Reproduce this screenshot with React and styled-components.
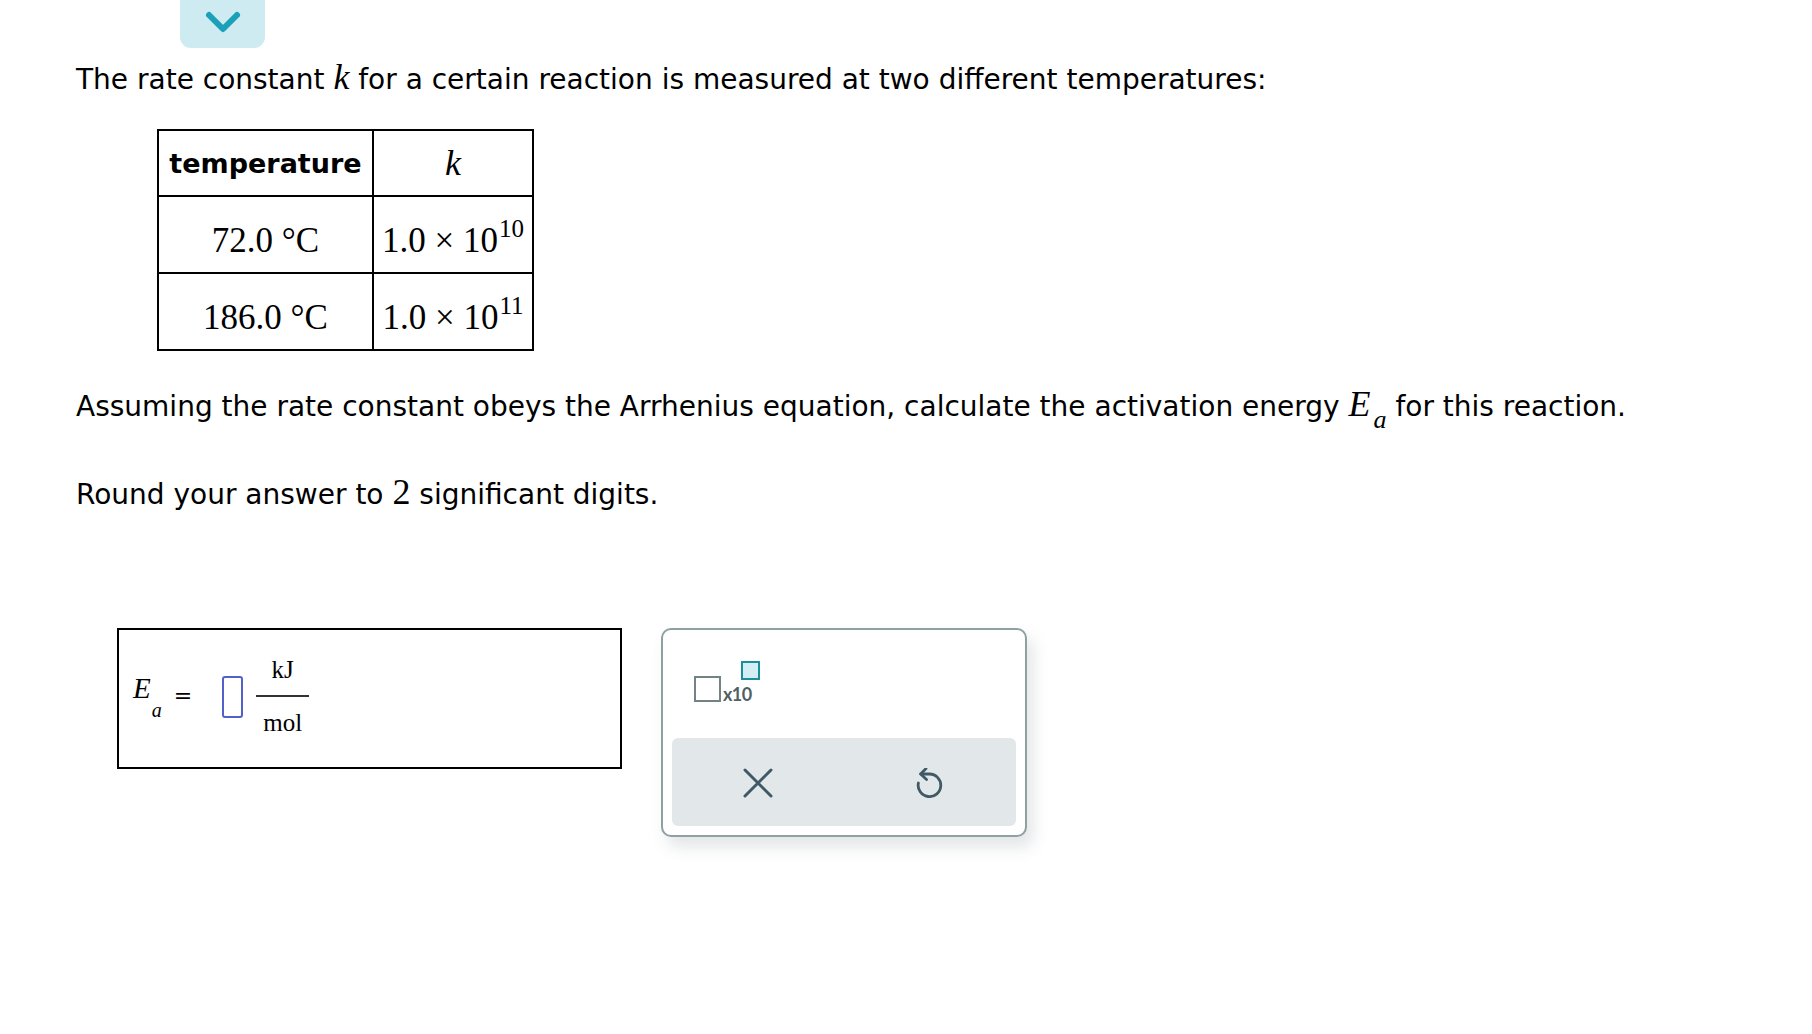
import styled, { createGlobalStyle } from "styled-components";

const GlobalStyle = createGlobalStyle`
  body {
    margin: 0;
    background: #ffffff;
    color: #000000;
    font-family: "DejaVu Sans", Verdana, sans-serif;
  }
`;

const Page = styled.div`
  width: 1812px;
  height: 1034px;
  box-sizing: border-box;
  padding-left: 76px;
  overflow: hidden;
`;

const CollapseTab = styled.button`
  display: flex;
  align-items: center;
  justify-content: center;
  width: 85px;
  height: 48px;
  margin-left: 104px;
  padding: 0 0 4px 0;
  border: none;
  border-radius: 0 0 11px 11px;
  background: #cdebf1;
`;

const Para = styled.p`
  margin: ${(p) => p.top}px 0 0 0;
  font-size: 28px;
  line-height: 30px;
  white-space: nowrap;
`;

const MathVar = styled.span`
  font-family: "Liberation Serif", "Times New Roman", serif;
  font-style: italic;
  font-weight: normal;
  font-size: 36px;
`;

const MathNum = styled.span`
  font-family: "Liberation Serif", "Times New Roman", serif;
  font-size: 36px;
`;

const Sub = styled.span`
  font-family: "Liberation Serif", "Times New Roman", serif;
  font-style: italic;
  font-size: 26px;
  position: relative;
  top: 12px;
  line-height: 0;
  margin-left: 3px;
`;

const Sup = styled.span`
  font-size: 25px;
  position: relative;
  top: -15px;
  line-height: 0;
  margin-left: 1px;
`;

const Table = styled.table`
  margin: 34px 0 0 81px;
  border-collapse: collapse;
  border: 2px solid #000;
`;

const HeadCell = styled.th`
  border: 2px solid #000;
  height: 64px;
  padding: 0 6px;
  font-size: 27px;
  font-weight: bold;
  text-align: center;
`;

const Cell = styled.td`
  border: 2px solid #000;
  height: ${(p) => p.h}px;
  width: ${(p) => p.w}px;
  box-sizing: border-box;
  padding: 13px 4px 0;
  text-align: center;
  vertical-align: middle;
  font-family: "Liberation Serif", "Times New Roman", serif;
  font-size: 35px;
  white-space: nowrap;
`;

const AnswerRow = styled.div`
  display: flex;
  align-items: flex-start;
  gap: 39px;
  margin: 118px 0 0 41px;
`;

const AnswerBox = styled.div`
  display: flex;
  align-items: center;
  width: 505px;
  height: 141px;
  box-sizing: border-box;
  border: 2.5px solid #000;
  padding: 0 0 4px 14px;
  font-family: "Liberation Serif", "Times New Roman", serif;
`;

const Ea = styled.span`
  font-style: italic;
  font-size: 29px;
  display: inline-flex;
  align-items: flex-start;
`;

const EaSub = styled.span`
  font-size: 20px;
  margin: 27px 0 0 1px;
`;

const Equals = styled.span`
  font-family: "DejaVu Sans", sans-serif;
  font-size: 22px;
  margin: 0 0 2px 12px;
`;

const InputSlot = styled.span`
  display: block;
  width: 21px;
  height: 42px;
  box-sizing: border-box;
  border: 2px solid #5161c9;
  border-radius: 3px;
  margin-left: 30px;
`;

const Fraction = styled.span`
  display: inline-flex;
  flex-direction: column;
  align-items: center;
  margin-left: 13px;
  font-size: 25px;
  line-height: 26px;
`;

const FracLine = styled.span`
  display: block;
  width: 53px;
  height: 2px;
  background: #333;
  margin: 12px 0 13px;
`;

const Keypad = styled.div`
  width: 366px;
  height: 209px;
  box-sizing: border-box;
  border: 2px solid #8fa0a2;
  border-radius: 10px;
  background: #fff;
  box-shadow: 6px 10px 16px rgba(60, 80, 90, 0.15);
  padding: 9px;
  display: flex;
  flex-direction: column;
  justify-content: space-between;
`;

const KeyArea = styled.div`
  padding: 25px 0 0 22px;
`;

const PowerKey = styled.button`
  position: relative;
  display: flex;
  align-items: flex-end;
  padding: 12px 0 0 0;
  border: none;
  background: none;
`;

const BaseSquare = styled.span`
  display: block;
  width: 27px;
  height: 26px;
  box-sizing: border-box;
  border: 2.5px solid #728385;
`;

const PowerText = styled.span`
  font-family: Lato, "Open Sans", sans-serif;
  font-size: 18px;
  font-weight: 700;
  line-height: 16px;
  color: #4f5f62;
  margin-left: 2px;
  letter-spacing: -0.6px;
`;

const ExpSquare = styled.span`
  position: absolute;
  left: 47px;
  top: -3px;
  width: 19px;
  height: 19px;
  box-sizing: border-box;
  border: 2.5px solid #1d8f9c;
  background: #d4eff3;
`;

const ActionBar = styled.div`
  display: flex;
  height: 88px;
  border-radius: 6px;
  background: #e2e7e9;
`;

const ActionButton = styled.button`
  flex: 1;
  display: flex;
  align-items: center;
  justify-content: center;
  border: none;
  background: none;
  padding: 2px 0 0 0;
`;

const Chevron = () => (
  <svg width="38" height="24" viewBox="0 0 38 24">
    <path d="M5 5 L19 19 L33 5" fill="none" stroke="#1aa0b8" strokeWidth="6" strokeLinecap="round" strokeLinejoin="round" />
  </svg>
);

const ClearIcon = () => (
  <svg width="30" height="30" viewBox="0 0 30 30">
    <path d="M2 2 L28 28 M28 2 L2 28" fill="none" stroke="#3f5a66" strokeWidth="3" strokeLinecap="round" />
  </svg>
);

const UndoIcon = () => (
  <svg width="30" height="30" viewBox="0 0 30 30">
    <path d="M11 0.5 L5.7 6 L11.5 11.5" fill="none" stroke="#3f5a66" strokeWidth="2.8" strokeLinecap="round" strokeLinejoin="round" />
    <path d="M5.7 6 H14.5 A11.3 11.3 0 1 1 3.4 15" fill="none" stroke="#3f5a66" strokeWidth="2.8" strokeLinecap="round" />
  </svg>
);

const App = () => {
  return (
    <>
      <GlobalStyle />
      <Page>
        <CollapseTab aria-label="collapse">
          <Chevron />
        </CollapseTab>

        <Para top={14}>
          The rate constant <MathVar>k</MathVar> for a certain reaction is measured at two different temperatures:
        </Para>

        <Table>
          <thead>
            <tr>
              <HeadCell>temperature</HeadCell>
              <HeadCell>
                <MathVar>k</MathVar>
              </HeadCell>
            </tr>
          </thead>
          <tbody>
            <tr>
              <Cell h={77} w={215}>72.0 °C</Cell>
              <Cell h={77} w={160}>
                1.0 × 10<Sup>10</Sup>
              </Cell>
            </tr>
            <tr>
              <Cell h={77} w={215}>186.0 °C</Cell>
              <Cell h={77} w={160}>
                1.0 × 10<Sup>11</Sup>
              </Cell>
            </tr>
          </tbody>
        </Table>

        <Para top={38}>
          Assuming the rate constant obeys the Arrhenius equation, calculate the activation energy <MathVar>E</MathVar>
          <Sub>a</Sub> for this reaction.
        </Para>

        <Para top={55}>
          Round your answer to <MathNum>2</MathNum> significant digits.
        </Para>

        <AnswerRow>
          <AnswerBox>
            <Ea>
              E<EaSub>a</EaSub>
            </Ea>
            <Equals>=</Equals>
            <InputSlot />
            <Fraction>
              <span>kJ</span>
              <FracLine />
              <span>mol</span>
            </Fraction>
          </AnswerBox>

          <Keypad>
            <KeyArea>
              <PowerKey aria-label="times ten to the power">
                <BaseSquare />
                <PowerText>x10</PowerText>
                <ExpSquare />
              </PowerKey>
            </KeyArea>
            <ActionBar>
              <ActionButton aria-label="clear">
                <ClearIcon />
              </ActionButton>
              <ActionButton aria-label="undo">
                <UndoIcon />
              </ActionButton>
            </ActionBar>
          </Keypad>
        </AnswerRow>
      </Page>
    </>
  );
};

export default App;
